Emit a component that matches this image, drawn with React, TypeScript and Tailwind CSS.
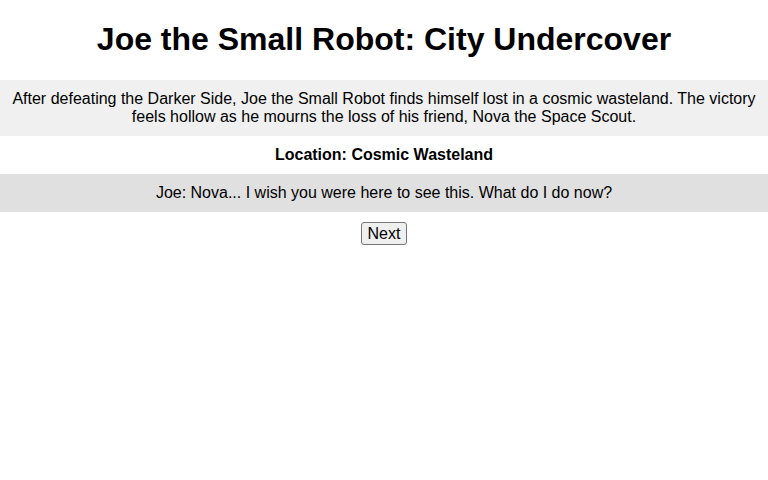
import React, { useState } from 'react';

const scenes = [
  {
    intro:
      'After defeating the Darker Side, Joe the Small Robot finds himself lost in a cosmic wasteland. The victory feels hollow as he mourns the loss of his friend, Nova the Space Scout.',
    location: 'Cosmic Wasteland',
    line: 'Joe: Nova... I wish you were here to see this. What do I do now?',
  },
];

const App: React.FC = () => {
  const [step, setStep] = useState(0);
  const scene = scenes[step % scenes.length];

  return (
    <div className="text-center text-black font-['Liberation_Sans',Arial,sans-serif]">
      <h1 className="text-[32px] font-bold my-[21.44px] leading-[37px]">
        Joe the Small Robot: City Undercover
      </h1>

      {/* Story intro */}
      <div className="bg-[#f0f0f0] p-[10px] text-base leading-[18px]">{scene.intro}</div>

      <div className="p-[10px] text-base leading-[18px] font-bold">Location: {scene.location}</div>

      {/* Dialogue line */}
      <div className="bg-[#e0e0e0] p-[10px] text-base leading-[18px]">{scene.line}</div>

      <button
        onClick={() => setStep(step + 1)}
        className="mt-[10px] bg-[#efefef] border border-[#767676] rounded-[3px] px-[6px] py-px text-base leading-[19px]"
      >
        Next
      </button>
    </div>
  );
};

export default App;
